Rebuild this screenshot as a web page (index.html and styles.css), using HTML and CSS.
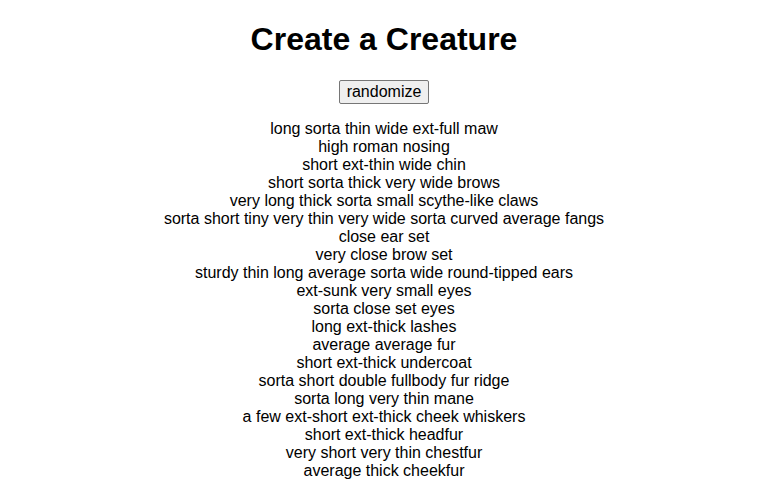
FILE: index.html
```html
<!DOCTYPE html>
<html>
<head>
<meta charset="utf-8">
<link rel="stylesheet" href="styles.css">
</head>
<body>
<div class="page">
  <h1 class="title">Create a Creature</h1>
  <div class="controls"><button class="btn">randomize</button></div>
  <div class="traits">
    <div>long sorta thin wide ext-full maw</div>
    <div>high roman nosing</div>
    <div>short ext-thin wide chin</div>
    <div>short sorta thick very wide brows</div>
    <div>very long thick sorta small scythe-like claws</div>
    <div>sorta short tiny very thin very wide sorta curved average fangs</div>
    <div>close ear set</div>
    <div>very close brow set</div>
    <div>sturdy thin long average sorta wide round-tipped ears</div>
    <div>ext-sunk very small eyes</div>
    <div>sorta close set eyes</div>
    <div>long ext-thick lashes</div>
    <div>average average fur</div>
    <div>short ext-thick undercoat</div>
    <div>sorta short double fullbody fur ridge</div>
    <div>sorta long very thin mane</div>
    <div>a few ext-short ext-thick cheek whiskers</div>
    <div>short ext-thick headfur</div>
    <div>very short very thin chestfur</div>
    <div>average thick cheekfur</div>
  </div>
</div>
</body>
</html>
```
FILE: styles.css
```css
html, body {
  margin: 0;
  padding: 0;
  background: #fff;
}
.page {
  font-family: "Liberation Sans", Arial, sans-serif;
  color: #000;
  text-align: center;
  padding-top: 21px;
}
.title {
  font-size: 32px;
  font-weight: bold;
  line-height: 37px;
  margin: 0 0 22px;
}
.controls {
  height: 24px;
}
.btn {
  font-family: "Liberation Sans", Arial, sans-serif;
  font-size: 16px;
  line-height: 18px;
  height: 24px;
  padding: 1px 7px;
  margin: 0;
  color: #000;
  background: #efefef;
  border: 1px solid #767676;
  border-radius: 2px;
  vertical-align: top;
}
.traits {
  margin-top: 16px;
  font-size: 16px;
  line-height: 18px;
}
```
